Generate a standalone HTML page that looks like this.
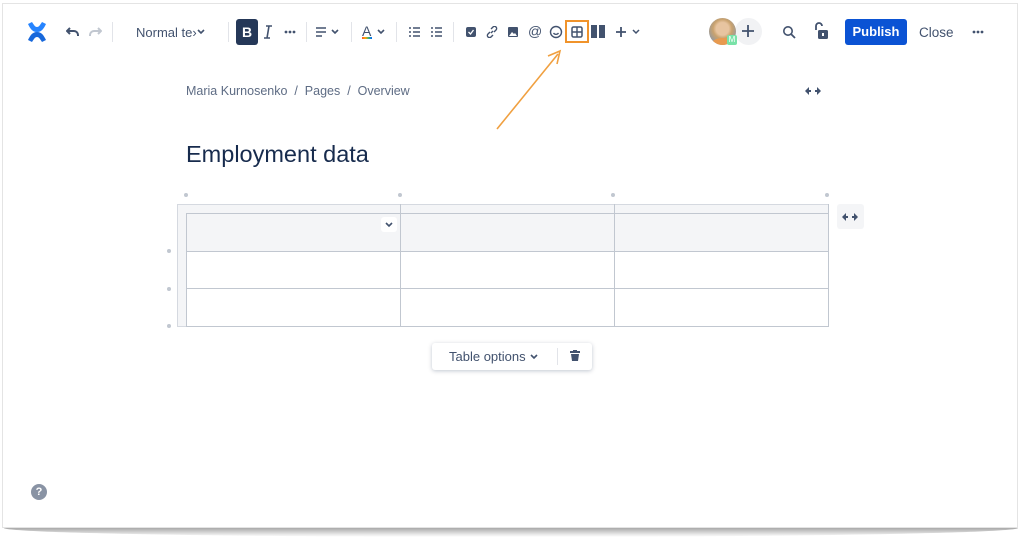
<!DOCTYPE html>
<html><head><meta charset="utf-8"><style>
*{box-sizing:border-box;margin:0;padding:0}
body{width:1024px;height:542px;background:#fff;position:relative;overflow:hidden;font-family:"Liberation Sans",sans-serif;color:#42526e}
.frame{position:absolute;left:2px;top:3px;width:1016px;height:525px;border:1px solid #e4e4e4;background:#fff}
.shadow{position:absolute;left:4px;top:528px;width:1014px;height:9px;background:linear-gradient(#a9a9a9,#e8e8e8 70%,#fff);border-radius:0 0 50% 50%/0 0 100% 100%}
.a{position:absolute}
.t{position:absolute;font-size:13px;color:#42526e;white-space:nowrap}
.sep{position:absolute;top:22px;width:1px;height:20px;background:#e2e4e9}
.dot{position:absolute;width:4px;height:4px;border-radius:50%;background:#c1c7d0}
</style></head><body>
<div class="frame"></div>
<div class="shadow"></div>
<!-- logo -->
<svg class="a" style="left:26px;top:21px" width="22" height="22" viewBox="0 0 22 22"><path d="M2 3l4-2c2 3 3 5 5 5s3-2 5-5l4 2c-2 4-4 8-9 8S4 7 2 3z" fill="#2684ff"/><path d="M2 19l4 2c2-3 3-5 5-5s3 2 5 5l4-2c-2-4-4-8-9-8S4 15 2 19z" fill="#1868db"/></svg>
<svg class="a" style="left:66px;top:26px" width="14" height="12"><path d="M4 2L1 5l3 3M1 5h7a4 4 0 0 1 4 4v1" stroke="#42526e" stroke-width="2" fill="none"/></svg>
<svg class="a" style="left:88px;top:26px" width="14" height="12"><path d="M10 2l3 3-3 3M13 5H6a4 4 0 0 0-4 4v1" stroke="#c1c7d0" stroke-width="2" fill="none"/></svg>
<div class="sep" style="left:112px"></div>
<div class="t" style="left:136px;top:25px">Normal te›</div>
<svg class="a" style="left:197px;top:29px" width="8" height="6"><path d="M1 1l3 3 3-3" stroke="#42526e" stroke-width="1.6" fill="none"/></svg>
<div class="sep" style="left:228px"></div>
<div class="a" style="left:236px;top:19px;width:22px;height:26px;background:#253858;border-radius:3px;color:#fff;font-weight:bold;font-size:14px;text-align:center;line-height:26px">B</div>
<svg class="a" style="left:263px;top:25px" width="10" height="14"><path d="M3 1h6M1 13h6M6 1L4 13" stroke="#42526e" stroke-width="1.6"/></svg>
<svg class="a" style="left:284px;top:30px" width="12" height="4"><circle cx="2" cy="2" r="1.4" fill="#42526e"/><circle cx="6" cy="2" r="1.4" fill="#42526e"/><circle cx="10" cy="2" r="1.4" fill="#42526e"/></svg>
<div class="sep" style="left:306px"></div>
<svg class="a" style="left:316px;top:27px" width="26" height="10"><path d="M0 1h10M0 5h10M0 9h6" stroke="#42526e" stroke-width="1.6"/><path d="M16 3l3 3 3-3" stroke="#42526e" stroke-width="1.6" fill="none"/></svg>
<div class="sep" style="left:351px"></div>
<div class="t" style="left:362px;top:23px;font-size:14px">A</div>
<div class="a" style="left:362px;top:37px;width:10px;height:2px;background:linear-gradient(90deg,#ff5630,#ffab00,#36b37e,#0065ff)"></div>
<svg class="a" style="left:377px;top:29px" width="8" height="6"><path d="M1 1l3 3 3-3" stroke="#42526e" stroke-width="1.6" fill="none"/></svg>
<div class="sep" style="left:396px"></div>
<svg class="a" style="left:409px;top:27px" width="34" height="11"><path d="M0 1h2M0 5h2M0 9h2M4 1h7M4 5h7M4 9h7M22 1h2M22 5h2M22 9h2M26 1h7M26 5h7M26 9h7" stroke="#42526e" stroke-width="1.4"/></svg>
<div class="sep" style="left:453px"></div>
<svg class="a" style="left:466px;top:27px" width="10" height="10"><rect width="10" height="10" rx="2" fill="#42526e"/><path d="M2.5 5l2 2 3-4" stroke="#fff" stroke-width="1.3" fill="none"/></svg>
<svg class="a" style="left:486px;top:26px" width="12" height="12"><path d="M5 7l2-2M4 6L2 8a2 2 0 0 0 3 3l2-2M8 6l2-2a2 2 0 0 0-3-3L5 3" stroke="#42526e" stroke-width="1.4" fill="none"/></svg>
<svg class="a" style="left:508px;top:27px" width="10" height="10"><rect width="10" height="10" rx="1" fill="#42526e"/><path d="M1 9l3-4 2 2 1-1 2 3z" fill="#fff"/></svg>
<div class="t" style="left:528px;top:23px;font-size:14px">@</div>
<svg class="a" style="left:549px;top:25px" width="14" height="14"><circle cx="7" cy="7" r="5.5" stroke="#42526e" stroke-width="1.4" fill="none"/><path d="M4.5 8a3 3 0 0 0 5 0" stroke="#42526e" stroke-width="1.3" fill="none"/></svg>
<div class="a" style="left:565px;top:20px;width:24px;height:23px;border:2px solid #f0932b"></div>
<svg class="a" style="left:571px;top:26px" width="12" height="12"><rect x="1" y="1" width="10" height="10" rx="1.5" stroke="#42526e" stroke-width="1.5" fill="none"/><path d="M6 1v10M1 6h10" stroke="#42526e" stroke-width="1.4"/></svg>
<div class="a" style="left:591px;top:25px;width:6px;height:13px;background:#42526e"></div>
<div class="a" style="left:599px;top:25px;width:6px;height:13px;background:#42526e"></div>
<svg class="a" style="left:615px;top:26px" width="26" height="12"><path d="M6 1v10M1 6h10" stroke="#42526e" stroke-width="1.8"/><path d="M18 4l3 3 3-3" stroke="#42526e" stroke-width="1.5" fill="none"/></svg>
<!-- arrow -->
<svg class="a" style="left:490px;top:44px" width="80" height="90"><path d="M7 85L68 10" stroke="#f0a040" stroke-width="1.6"/><path d="M58 12l12-5-3 13" stroke="#f0a040" stroke-width="1.6" fill="none"/></svg>
<!-- avatar -->
<div class="a" style="left:735px;top:18px;width:27px;height:27px;border-radius:50%;background:#f1f2f4"></div>
<svg class="a" style="left:742px;top:25px" width="12" height="12"><path d="M6 0v12M0 6h12" stroke="#42526e" stroke-width="1.8"/></svg>
<div class="a" style="left:709px;top:18px;width:27px;height:27px;border-radius:50%;background:radial-gradient(circle at 50% 40%,#e7c4a0 30%,#c9a26e 45%,#9a9a9a 70%);overflow:hidden"><div style="position:absolute;left:3px;top:20px;width:22px;height:10px;background:#e89a4f;border-radius:50%"></div></div>
<div class="a" style="left:727px;top:35px;width:10px;height:10px;background:#79e2a8;border-radius:2px;color:#fff;font-size:8px;text-align:center;line-height:10px">M</div>
<svg class="a" style="left:782px;top:25px" width="14" height="14"><circle cx="6" cy="6" r="4.2" stroke="#42526e" stroke-width="1.6" fill="none"/><path d="M9 9l4 4" stroke="#42526e" stroke-width="1.8"/></svg>
<svg class="a" style="left:813px;top:22px" width="16" height="18"><path d="M3 8V4a3 3 0 0 1 6 0" stroke="#42526e" stroke-width="1.8" fill="none"/><rect x="5" y="8" width="10" height="9" rx="1.5" fill="#42526e"/><rect x="9" y="11" width="2" height="3" fill="#fff"/></svg>
<div class="a" style="left:845px;top:19px;width:62px;height:26px;background:#0b53d4;border-radius:3px;color:#fff;font-size:13px;font-weight:bold;text-align:center;line-height:26px">Publish</div>
<div class="t" style="left:919px;top:25px;font-size:13.5px">Close</div>
<svg class="a" style="left:972px;top:30px" width="12" height="4"><circle cx="2" cy="2" r="1.4" fill="#42526e"/><circle cx="6" cy="2" r="1.4" fill="#42526e"/><circle cx="10" cy="2" r="1.4" fill="#42526e"/></svg>
<!-- breadcrumbs -->
<div class="t" style="left:186px;top:84px;font-size:12.5px;color:#5e6c84">Maria Kurnosenko&nbsp;&nbsp;/&nbsp;&nbsp;Pages&nbsp;&nbsp;/&nbsp;&nbsp;Overview</div>
<svg class="a" style="left:805px;top:87px" width="16" height="8"><path d="M4 0L0 4l4 4V5h2V3H4zM12 0l4 4-4 4V5h-2V3h2z" fill="#42526e"/></svg>
<div class="t" style="left:186px;top:141px;font-size:23.5px;color:#172b4d">Employment data</div>
<!-- table -->
<div class="dot" style="left:184px;top:193px"></div><div class="dot" style="left:398px;top:193px"></div><div class="dot" style="left:611px;top:193px"></div><div class="dot" style="left:825px;top:193px"></div>
<div class="dot" style="left:167px;top:249px"></div><div class="dot" style="left:167px;top:287px"></div><div class="dot" style="left:167px;top:324px"></div>
<div class="a" style="left:177px;top:204px;width:652px;height:123px;border:1px solid #d5d9e0;background:#f4f5f7"></div>
<div class="a" style="left:186px;top:213px;width:643px;height:114px;border:1px solid #c1c7d0;border-right:none"></div>
<div class="a" style="left:187px;top:214px;width:641px;height:37px;background:#f4f5f7"></div>
<div class="a" style="left:187px;top:252px;width:641px;height:74px;background:#fff"></div>
<div class="a" style="left:186px;top:251px;width:643px;height:1px;background:#c1c7d0"></div>
<div class="a" style="left:186px;top:288px;width:643px;height:1px;background:#c1c7d0"></div>
<div class="a" style="left:400px;top:204px;width:1px;height:123px;background:#c1c7d0"></div>
<div class="a" style="left:614px;top:204px;width:1px;height:123px;background:#c1c7d0"></div>
<div class="a" style="left:828px;top:204px;width:1px;height:123px;background:#c1c7d0"></div>
<div class="a" style="left:381px;top:217px;width:16px;height:15px;background:#fff;border-radius:3px"></div>
<svg class="a" style="left:385px;top:222px" width="8" height="6"><path d="M1 1l3 3 3-3" stroke="#42526e" stroke-width="1.6" fill="none"/></svg>
<div class="a" style="left:837px;top:204px;width:27px;height:25px;background:#f4f5f7;border-radius:3px"></div>
<svg class="a" style="left:842px;top:213px" width="16" height="8"><path d="M4 0L0 4l4 4V5h2V3H4zM12 0l4 4-4 4V5h-2V3h2z" fill="#42526e"/></svg>
<!-- table options -->
<div class="a" style="left:432px;top:343px;width:160px;height:27px;background:#fff;border-radius:3px;box-shadow:0 1px 4px rgba(9,30,66,.25)"></div>
<div class="t" style="left:449px;top:349px;font-size:13px">Table options</div>
<svg class="a" style="left:530px;top:354px" width="8" height="6"><path d="M1 1l3 3 3-3" stroke="#42526e" stroke-width="1.6" fill="none"/></svg>
<div class="a" style="left:557px;top:348px;width:1px;height:17px;background:#e2e4e9"></div>
<svg class="a" style="left:570px;top:350px" width="10" height="12"><rect x="0" y="1" width="10" height="2" fill="#42526e"/><rect x="3" y="0" width="4" height="2" fill="#42526e"/><path d="M1 4h8l-1 7H2z" fill="#42526e"/></svg>
<!-- help -->
<div class="a" style="left:31px;top:484px;width:16px;height:16px;border-radius:50%;background:#8993a4;color:#fff;font-size:11px;font-weight:bold;text-align:center;line-height:16px">?</div>
</body></html>
